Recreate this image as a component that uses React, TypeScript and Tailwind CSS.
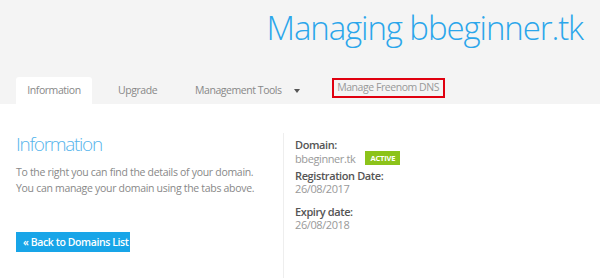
import { useState } from "react"

const App = () => {
  const [active] = useState("Information")

  return (
    <div className="w-[600px] h-[278px] overflow-hidden bg-white font-['Open_Sans',sans-serif]">
      <div className="bg-[#f4f4f4] h-[104px] flex flex-col">
        <h1 className="text-right pr-[17px] pt-[8px] text-[33px] leading-[40px] tracking-[-1.1px] font-light text-[#2ba6eb]">
          Managing bbeginner.tk
        </h1>
        <div className="mt-auto flex items-center h-[27px] pl-4 text-[10.5px] tracking-[-0.45px] text-[#888]">
          <div
            className={
              active === "Information"
                ? "w-[76px] h-full bg-white rounded-t-[3px] flex items-center justify-center"
                : "w-[76px] h-full flex items-center justify-center"
            }
          >
            Information
          </div>
          <div className="ml-[26px]">Upgrade</div>
          <div className="ml-[38px] flex items-center">
            Management Tools
            <span className="ml-[12px] w-0 h-0 border-x-[3px] border-x-transparent border-t-[4px] border-t-[#555]" />
          </div>
          <div className="ml-[32px] w-[113px] h-[20px] mt-[-6px] border-2 border-[#e0000f] flex items-center justify-center text-[#999]">
            Manage Freenom DNS
          </div>
        </div>
      </div>

      <div className="flex">
        <div className="w-[283px] pl-4 pt-[28px]">
          <h2 className="text-[19px] leading-[24px] tracking-[-1.3px] font-light text-[#55b4ec]">Information</h2>
          <p className="mt-[8px] text-[10.5px] leading-[16px] tracking-[-0.3px] text-[#888]">
            To the right you can find the details of your domain.
            <br />
            You can manage your domain using the tabs above.
          </p>
          <button className="mt-[36px] h-[20px] w-[114px] bg-[#18a5e8] text-white text-[10.5px] tracking-[-0.4px] font-semibold leading-[20px] text-left pl-[7px] whitespace-nowrap">
            « Back to Domains List
          </button>
        </div>
        <div className="border-l border-[#eeeeee] mt-[29px] pl-[11px] pt-[5px] h-[160px] text-[11px] leading-[13px] tracking-[-0.4px]">
          <div className="font-semibold text-[#555]">Domain:</div>
          <div className="flex items-center h-[14px] text-[#999]">
            bbeginner.tk
            <span className="ml-[10px] w-[35px] h-[14px] bg-[#8cc31a] text-white text-[7.5px] font-bold leading-[14px] tracking-[-0.2px] text-center">
              ACTIVE
            </span>
          </div>
          <div className="font-semibold text-[#555] mt-[4px]">Registration Date:</div>
          <div className="text-[#999]">26/08/2017</div>
          <div className="font-semibold text-[#555] mt-[10px]">Expiry date:</div>
          <div className="text-[#999]">26/08/2018</div>
        </div>
      </div>
    </div>
  )
}

export default App
